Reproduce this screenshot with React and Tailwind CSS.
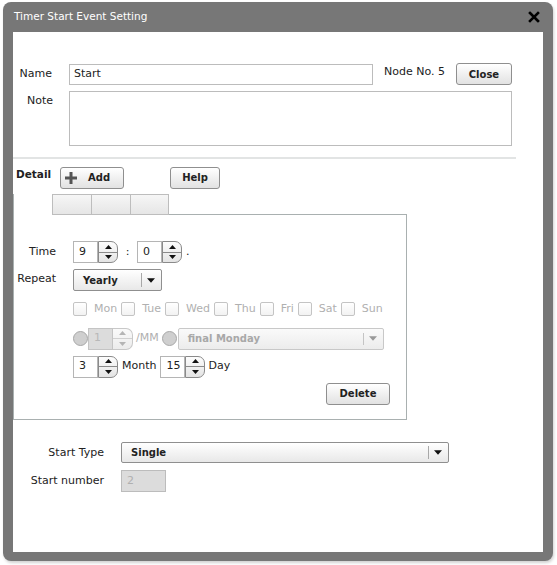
import React from "react";

const Tri = ({ up, color = "#111", w = 7, h = 4 }) => (
  <svg width={w} height={h} viewBox="0 0 7 4">
    <path d={up ? "M0 4 L3.5 0 L7 4Z" : "M0 0 L7 0 L3.5 4Z"} fill={color} />
  </svg>
);

function Spinner({ value, disabled }) {
  return (
    <div className="flex h-[22px]">
      <div
        className={
          disabled
            ? "w-[25px] h-full border border-[#c4c4c4] bg-[#dcdcdc] text-[#b8b8b8] flex items-center pl-[5px]"
            : "w-[25px] h-full border border-[#b5b5b5] bg-white text-[#222] flex items-center pl-[5px]"
        }
      >
        {value}
      </div>
      <div
        className={
          disabled
            ? "w-[20px] h-full border border-l-0 border-[#c8c8c8] rounded-r-[7px] flex flex-col overflow-hidden bg-gradient-to-b from-[#fafafa] to-[#ececec]"
            : "w-[20px] h-full border border-[#8a8a8a] rounded-r-[7px] flex flex-col overflow-hidden bg-gradient-to-b from-[#fdfdfd] to-[#e4e4e4]"
        }
      >
        <div
          className={
            disabled
              ? "flex-1 flex items-center justify-center border-b border-[#d0d0d0]"
              : "flex-1 flex items-center justify-center border-b border-[#8a8a8a]"
          }
        >
          <Tri up color={disabled ? "#b5b5b5" : "#111"} />
        </div>
        <div className="flex-1 flex items-center justify-center">
          <Tri color={disabled ? "#b5b5b5" : "#111"} />
        </div>
      </div>
    </div>
  );
}

function Button({ children, className }) {
  return (
    <div
      className={
        "h-[22px] border border-[#8f8f8f] rounded-[3px] bg-gradient-to-b from-[#ffffff] to-[#e2e2e2] flex items-center justify-center font-bold text-[10px] text-[#222] " +
        className
      }
    >
      {children}
    </div>
  );
}

function Select({ label, width, disabled, h = "h-[21px]" }) {
  return (
    <div
      className={
        (disabled
          ? "border-[#c8c8c8] text-[#a8a8a8] from-[#fafafa] to-[#ececec] "
          : "border-[#8f8f8f] text-[#222] from-[#ffffff] to-[#e8e8e8] ") +
        h +
        " border rounded-[2px] bg-gradient-to-b flex items-center font-bold text-[10px]"
      }
      style={{ width }}
    >
      <div className="flex-1 pl-[9px]">{label}</div>
      <div className="w-[20px] h-full flex items-center justify-center relative">
        <div
          className={
            disabled
              ? "absolute left-0 top-[4px] bottom-[4px] w-px bg-[#c4c4c4]"
              : "absolute left-0 top-[3px] bottom-[3px] w-px bg-[#a8a8a8]"
          }
        />
        <Tri color={disabled ? "#999" : "#111"} w={8} h={5} />
      </div>
    </div>
  );
}

function Checkbox() {
  return (
    <div className="w-[14px] h-[14px] border border-[#c4c4c4] rounded-[2px] bg-gradient-to-b from-white to-[#f2f2f2]" />
  );
}

function Radio() {
  return (
    <div className="w-[15px] h-[15px] rounded-full border border-[#a8a8a8] bg-[#cfcfcf]" />
  );
}

export default function App() {
  const days = ["Mon", "Tue", "Wed", "Thu", "Fri", "Sat", "Sun"];
  return (
    <div className="w-[557px] h-[565px] bg-white pt-[2px] pl-[3px] font-['DejaVu_Sans',sans-serif] text-[11px] text-[#222]">
      <div className="w-[550px] h-[559px] bg-[#777777] rounded-[8px] shadow-[1px_2px_3px_rgba(0,0,0,0.18)] flex flex-col">
        <div className="h-[30px] flex items-center justify-between pl-[11px] pr-[13px]">
          <span className="text-white text-[10.5px]">Timer Start Event Setting</span>
          <svg width="12" height="12" viewBox="0 0 12 12">
            <path d="M2 2 L10 10 M10 2 L2 10" stroke="#000" strokeWidth="2.6" strokeLinecap="square" />
          </svg>
        </div>
        <div className="mx-[10px] h-[520px] bg-white flex flex-col pt-[31px]">
          {/* Name row */}
          <div className="flex items-center">
            <div className="w-[39px] text-right">Name</div>
            <div className="ml-[17px] w-[304px] h-[21px] border border-[#bcbcbc] flex items-center pl-[4px]">
              Start
            </div>
            <div className="ml-[11px] -mt-[3px]">Node No. 5</div>
            <Button className="ml-[11px] w-[56px]">Close</Button>
          </div>
          {/* Note row */}
          <div className="flex items-start mt-[6px]">
            <div className="w-[40px] text-right pt-[2px]">Note</div>
            <div className="ml-[16px] w-[443px] h-[55px] border border-[#bcbcbc]" />
          </div>
          <div className="mt-[11px] h-[2px] w-[503px] bg-[#e2e4e4]" />
          {/* Detail row */}
          <div className="flex items-center mt-[8px] h-[21px]">
            <div className="w-[47px] pl-[3px] font-bold text-[10.5px] -mt-[5px]">Detail</div>
            <Button className="w-[64px] h-[21px] justify-start pl-[4px]">
              <svg width="12" height="12" viewBox="0 0 12 12">
                <path d="M4.5 0 H7.5 V4.5 H12 V7.5 H7.5 V12 H4.5 V7.5 H0 V4.5 H4.5Z" fill="#555" />
              </svg>
              <span className="ml-[11px]">Add</span>
            </Button>
            <Button className="ml-[46px] w-[50px] h-[21px]">Help</Button>
          </div>
          {/* Tabs */}
          <div className="flex mt-[6px] h-[21px] w-[394px]">
            <div className="w-[39px] h-full border-l border-[#a9b0b0]" />
            <div className="w-[39px] h-full border-t border-l border-b border-[#bdbdbd] bg-gradient-to-b from-[#f6f6f6] to-[#e6e6e6]" />
            <div className="w-[39px] h-full border-t border-l border-b border-[#bdbdbd] bg-gradient-to-b from-[#f6f6f6] to-[#e6e6e6]" />
            <div className="w-[39px] h-full border-t border-l border-r border-b border-[#bdbdbd] bg-gradient-to-b from-[#f6f6f6] to-[#e6e6e6]" />
            <div className="flex-1 h-full border-b border-[#a9b0b0]" />
          </div>
          {/* Panel */}
          <div className="w-[394px] h-[205px] border-l border-r border-b border-[#a9b0b0] flex flex-col pt-[26px]">
            <div className="flex items-center">
              <div className="w-[42px] text-right">Time</div>
              <div className="ml-[17px]">
                <Spinner value="9" />
              </div>
              <div className="w-[19px] text-center">:</div>
              <Spinner value="0" />
              <div className="ml-[4px]">.</div>
            </div>
            <div className="flex items-center mt-[6px]">
              <div className="w-[42px] text-right -mt-[2px]">Repeat</div>
              <div className="ml-[17px]">
                <Select label="Yearly" width={89} h="h-[22px]" />
              </div>
            </div>
            <div className="flex items-center mt-[10px] ml-[59px] text-[#b0b0b0]">
              {days.map((d) => (
                <div key={d} className="flex items-center mr-[4px]">
                  <Checkbox />
                  <span className="ml-[7px]">{d}</span>
                </div>
              ))}
            </div>
            <div className="flex items-center mt-[10px] ml-[59px]">
              <Radio />
              <Spinner value="1" disabled />
              <span className="ml-[3px] text-[#b0b0b0]">/MM</span>
              <div className="ml-[3px]">
                <Radio />
              </div>
              <div className="ml-[1px]">
                <Select label="final Monday" width={206} disabled h="h-[22px]" />
              </div>
            </div>
            <div className="flex items-center mt-[6px] ml-[59px]">
              <Spinner value="3" />
              <span className="ml-[4px]">Month</span>
              <div className="ml-[4px]">
                <Spinner value="15" />
              </div>
              <span className="ml-[3px]">Day</span>
            </div>
            <div className="flex justify-end pr-[16px] mt-[5px]">
              <Button className="w-[64px]">Delete</Button>
            </div>
          </div>
          {/* Start type */}
          <div className="flex items-center mt-[22px]">
            <div className="w-[91px] text-right mt-[2px]">Start Type</div>
            <div className="ml-[17px]">
              <Select label="Single" width={328} />
            </div>
          </div>
          <div className="flex items-center mt-[7px]">
            <div className="w-[91px] text-right">Start number</div>
            <div className="ml-[17px] w-[45px] h-[22px] border border-[#bcbcbc] bg-[#dcdcdc] text-[#b0b0b0] flex items-center pl-[5px]">
              2
            </div>
          </div>
        </div>
      </div>
    </div>
  );
}
